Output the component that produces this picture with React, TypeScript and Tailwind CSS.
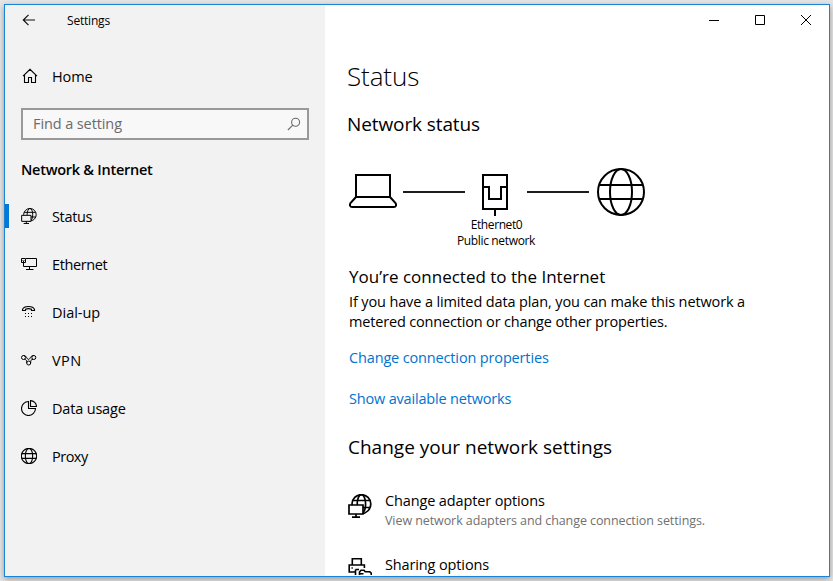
import type { ReactNode } from "react"

type IconProps = {
  className?: string
}

const HomeIcon = () => (
  <svg width="16" height="16" viewBox="0 0 16 16" fill="none" stroke="#000" strokeWidth="1.1">
    <path d="M1 8.2 8 1.3l7 6.9M2.5 7v7.5h4V9.5h3v5h4V7" />
  </svg>
)

const SearchIcon = () => (
  <svg width="14" height="14" viewBox="0 0 14 14" fill="none" stroke="#6b6b6b" strokeWidth="1.1">
    <circle cx="8.6" cy="5.2" r="4" />
    <path d="M5.8 8.2.9 13" />
  </svg>
)

// the fill class colours the monitor, so it hides the globe behind it
const NetworkIcon = ({ className }: IconProps) => (
  <svg className={className} viewBox="0 0 24 24" stroke="#000">
    <circle cx="13.4" cy="10.1" r="9.4" fill="none" />
    <ellipse cx="13.4" cy="10.1" rx="4.2" ry="9.4" fill="none" />
    <path d="M4.8 6.5h17.2M4.8 13.5h17.2" fill="none" />
    <path d="M1 11h14v9H1z" />
    <path d="M8 20v3M4 23.2h8" fill="none" />
  </svg>
)

const EthernetIcon = () => (
  <svg width="16" height="16" viewBox="0 0 16 16" fill="none" stroke="#000">
    <path d="M5 2.5h10.5v8H2.5V7M8.5 10.5v3M5 13.5h7.5" />
    <path d="M.5 2.5h4v4h-4zM.5 4.5h1M3.5 4.5h1M2.5 4.5v2" />
  </svg>
)

const DialUpIcon = () => (
  <svg width="16" height="16" viewBox="0 0 16 16" fill="none" stroke="#000" strokeWidth="1.1">
    <path d="M1.5 6.5v-1C2.2 3.3 4.6 2.5 7.5 2.5s5.3.8 6 3v1h-3V5.2c-1.8-.7-4.2-.7-6 0v1.3z" />
    <path d="M4 9.5h1M7 9.5h1M10 9.5h1M4 12.5h1M7 12.5h1M10 12.5h1" />
  </svg>
)

const VpnIcon = () => (
  <svg width="16" height="16" viewBox="0 0 16 16" fill="none" stroke="#000">
    <circle cx="2.5" cy="5.5" r="2" />
    <circle cx="12.8" cy="5.5" r="2" />
    <circle cx="7.7" cy="11" r="2" />
    <path d="M2.5 3.5C6 3.3 5.4 7.4 7.6 7.4c1.1 0 1.2-1.2 2-2.2.8-1.1 1.8-1.7 3.2-1.7" />
    <path d="M3.5 7.3c1.7.1 2.3 1 2.2 3.7M12 7.3c-1.9.1-2.5 1.2-2.3 3.7" />
  </svg>
)

const DataUsageIcon = () => (
  <svg width="16" height="16" viewBox="0 0 16 16" fill="none" stroke="#000" strokeWidth="1.1">
    <path d="M7.5 1.5a7 7 0 1 0 7 7h-7z" />
    <path d="M9.5.6a6 6 0 0 1 6 5.9h-6z" />
  </svg>
)

const GlobeIcon = ({ className }: IconProps) => (
  <svg className={className} viewBox="0 0 48 48" fill="none" stroke="#000">
    <circle cx="24" cy="24" r="23" />
    <ellipse cx="24" cy="24" rx="11" ry="23" />
    <path d="M2.5 17h43M2.5 31h43" />
  </svg>
)

const LaptopIcon = () => (
  <svg width="48" height="48" viewBox="0 0 48 48" fill="none" stroke="#000" strokeWidth="2">
    <path d="M7 29V7h34v22z" />
    <path d="M7 29 1.7 34.8C.2 37 1 39 3.2 39h41.6c2.2 0 3-2 1.5-4.2L41 29" />
  </svg>
)

const AdapterIcon = () => (
  <svg width="26" height="48" viewBox="0 0 26 48" fill="none" stroke="#000" strokeWidth="2">
    <path d="M1 7h24v34H1zM13 41v7" />
    <path d="M1 19h6v12h12V19h6" />
  </svg>
)

const SharingIcon = () => (
  <svg width="24" height="24" viewBox="0 0 24 24" fill="none" stroke="#000" strokeWidth="1.6">
    <path d="M4.3 10V3.8h9V10M7.5 17H1.2V10h15.2v3M3.5 13h1.3" />
    <path d="M7.5 14.5H11M7.5 14.5V20M11.5 20v-3l1.5-1.7h3l1.2 1.5h4.6l1.5 1.4V20M11.5 18.8h4" />
  </svg>
)

type NavItem = {
  label: string
  icon: ReactNode
  tracking: string
  active?: boolean
}

const navItems: NavItem[] = [
  {
    label: "Status",
    icon: <NetworkIcon className="size-4 fill-[#f2f2f2] stroke-[1.5]" />,
    tracking: "tracking-[-0.35px]",
    active: true,
  },
  { label: "Ethernet", icon: <EthernetIcon />, tracking: "tracking-[-0.4px]" },
  { label: "Dial-up", icon: <DialUpIcon />, tracking: "tracking-[-0.02px]" },
  { label: "VPN", icon: <VpnIcon />, tracking: "tracking-[0.4px]" },
  { label: "Data usage", icon: <DataUsageIcon />, tracking: "tracking-[-0.18px]" },
  { label: "Proxy", icon: <GlobeIcon className="size-4 stroke-[3.3]" />, tracking: "tracking-[-0.5px]" },
]

const Sidebar = () => (
  <aside className="w-80 shrink-0 bg-[#f2f2f2]">
    <div className="flex h-8 items-center pl-[17px]">
      <svg width="14" height="14" viewBox="0 0 14 14" fill="none" stroke="#111" strokeWidth="1.2" className="mb-0.5">
        <path d="M13 7H1.5M6.5 1.8 1.3 7l5.2 5.2" />
      </svg>
      <span className="ml-[31px] text-[12px] tracking-[-0.2px]">Settings</span>
    </div>

    <div className="mt-[15px] flex h-12 items-center pl-[17px]">
      <HomeIcon />
      <span className="ml-[14px] pt-0.5 text-[14.5px] tracking-[-0.1px]">Home</span>
    </div>

    <div className="mt-2 ml-4 flex h-8 w-72 items-center justify-between border-2 border-[#999] bg-[#f8f8f8] pr-1.5 pl-2.5 text-[#6b6b6b]">
      <span className="text-[14.5px] tracking-[-0.1px]">Find a setting</span>
      <SearchIcon />
    </div>

    <h2 className="mt-[18px] h-6 pl-4 text-[14.5px] leading-6 font-semibold tracking-[-0.26px]">
      Network &amp; Internet
    </h2>

    <nav className="mt-2.5">
      {navItems.map((item) => (
        <div key={item.label} className="flex h-12 items-center">
          <span className={item.active ? "h-6 w-1 bg-[#0078d7]" : "h-6 w-1"} />
          <span className="ml-3">{item.icon}</span>
          <span className={`ml-[15px] pt-0.5 text-[14.5px] ${item.tracking}`}>{item.label}</span>
        </div>
      ))}
    </nav>
  </aside>
)

const WindowControls = () => (
  <div className="flex h-[30px] justify-end">
    <span className="flex w-[46px] items-center justify-center">
      <svg width="10" height="10" viewBox="0 0 10 10" stroke="#000"><path d="M0 5.5h10" /></svg>
    </span>
    <span className="flex w-[46px] items-center justify-center">
      <svg width="10" height="10" viewBox="0 0 10 10" fill="none" stroke="#000"><path d="M.5.5h9v9h-9z" /></svg>
    </span>
    <span className="flex w-[46px] items-center justify-center">
      <svg width="10" height="10" viewBox="0 0 10 10" stroke="#000"><path d="m0 0 10 10M10 0 0 10" /></svg>
    </span>
  </div>
)

const NetworkDiagram = () => (
  <div className="mt-[30px] w-[297px]">
    <div className="ml-px flex h-12 items-center">
      <LaptopIcon />
      <span className="ml-1.5 h-0.5 w-[62px] bg-[#1c1c1c]" />
      <span className="flex w-[62px] justify-center pr-0.5"><AdapterIcon /></span>
      <span className="h-0.5 w-[62px] bg-[#1c1c1c]" />
      <GlobeIcon className="ml-2 size-12 shrink-0 stroke-2" />
    </div>
    <div className="mt-px text-center text-[12px] leading-4">
      <p className="tracking-[-0.4px]">Ethernet0</p>
      <p className="pr-px tracking-[-0.35px]">Public network</p>
    </div>
  </div>
)

const App = () => {
  return (
    <div className="h-[581px] w-[833px] overflow-hidden bg-[#e6e6e6] p-1 font-['Open_Sans','Noto_Sans',sans-serif] text-black">
      <div className="flex h-[573px] w-[826px] overflow-hidden border border-[#1883d7] bg-white shadow-[0_2px_6px_rgba(0,0,0,0.35)]">
        <Sidebar />

        <main className="min-w-0 flex-1 whitespace-nowrap">
          <WindowControls />

          <div className="pl-[23px]">
            <h1 className="mt-[21px] -ml-px h-10 text-[26px] leading-10 font-[350] tracking-[-0.1px]">Status</h1>
            <h2 className="mt-3.5 -ml-px h-7 text-[19px] leading-7 tracking-[-0.1px]">Network status</h2>

            <NetworkDiagram />

            <div className="pl-px">
              <h3 className="mt-4 h-6 text-[17px] leading-6">You’re connected to the Internet</h3>
              <p className="mt-[3px] text-[14.5px] leading-5 tracking-[-0.13px]">
                If you have a limited data plan, you can make this network a
                <br />
                <span className="tracking-[-0.17px]">metered connection or change other properties.</span>
              </p>
              <a className="mt-4 block text-[14.5px] leading-5 tracking-[-0.15px] text-[#0073cf]">Change connection properties</a>
              <a className="mt-[21px] block text-[14.5px] leading-5 tracking-[-0.18px] text-[#0073cf]">Show available networks</a>
            </div>

            <h2 className="mt-6 h-7 text-[19px] leading-7">Change your network settings</h2>

            <div className="mt-[30px] flex">
              <NetworkIcon className="mt-[3px] size-6 fill-white stroke-[1.7]" />
              <div className="ml-[13px]">
                <p className="text-[14.5px] leading-5 tracking-[-0.13px]">Change adapter options</p>
                <p className="mt-0.5 text-[12.5px] leading-4 tracking-[-0.08px] text-[#707070]">
                  View network adapters and change connection settings.
                </p>
              </div>
            </div>

            <div className="mt-[26px] flex">
              <SharingIcon />
              <p className="ml-[13px] text-[14.5px] leading-5 tracking-[-0.13px]">Sharing options</p>
            </div>
          </div>
        </main>
      </div>
    </div>
  )
}

export default App
